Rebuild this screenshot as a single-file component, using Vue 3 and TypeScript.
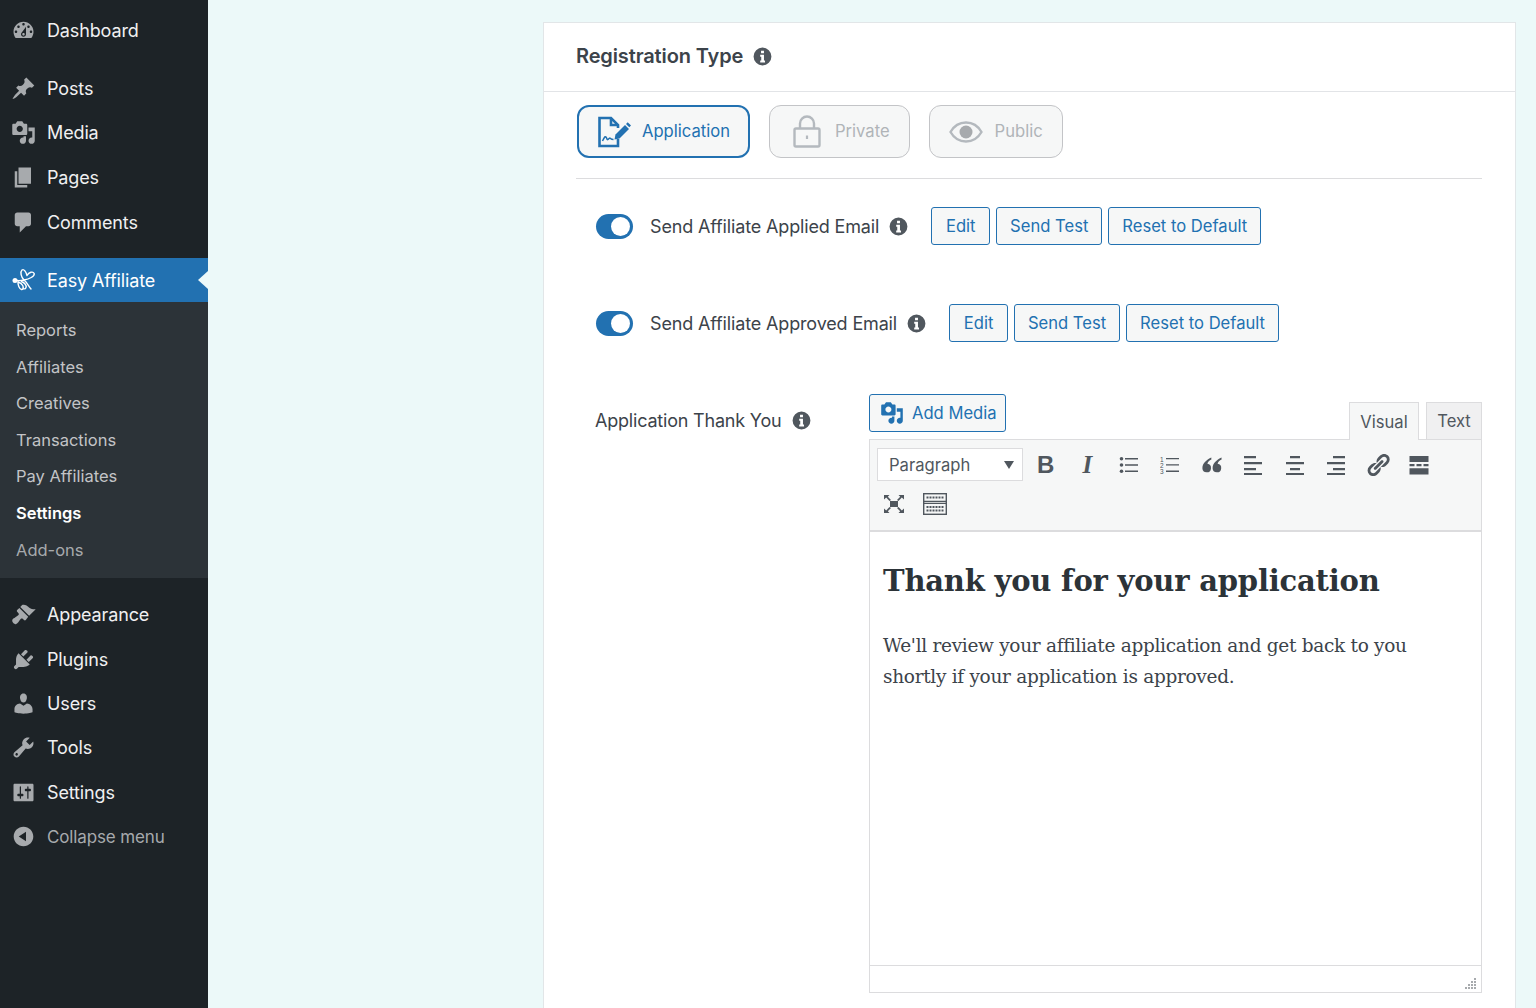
<script setup lang="ts">
const icons: Record<string, string> = {
  dashboard: 'M3.76 16h12.48c1.1-1.37 1.76-3.11 1.76-5 0-4.42-3.58-8-8-8s-8 3.58-8 8c0 1.89.66 3.63 1.76 5zM10 4c.55 0 1 .45 1 1s-.45 1-1 1-1-.45-1-1 .45-1 1-1zM6 6c.55 0 1 .45 1 1s-.45 1-1 1-1-.45-1-1 .45-1 1-1zm8 0c.55 0 1 .45 1 1s-.45 1-1 1-1-.45-1-1 .45-1 1-1zm-5.37 5.55L12 7v6c0 1.1-.9 2-2 2s-2-.9-2-2c0-.57.24-1.08.63-1.45zM4 10c.55 0 1 .45 1 1s-.45 1-1 1-1-.45-1-1 .45-1 1-1zm12 0c.55 0 1 .45 1 1s-.45 1-1 1-1-.45-1-1 .45-1 1-1zm-5 3c0-.55-.45-1-1-1s-1 .45-1 1 .45 1 1 1 1-.45 1-1z',
  post: 'M10.44 3.02l1.82-1.82 6.36 6.35-1.83 1.82c-1.05-.68-2.48-.57-3.41.36l-.75.75c-.92.93-1.04 2.35-.35 3.41l-1.83 1.82-2.41-2.41-2.8 2.79c-.42.42-3.38 2.71-3.8 2.29s1.86-3.39 2.28-3.81l2.79-2.79L4.1 9.36l1.83-1.82c1.05.69 2.48.57 3.4-.36l.75-.75c.93-.92 1.05-2.35.36-3.41z',
  media: 'M13 11V4c0-.55-.45-1-1-1h-1.67L9 1H5L3.67 3H2c-.55 0-1 .45-1 1v7c0 .55.45 1 1 1h10c.55 0 1-.45 1-1zM7 4.5c1.38 0 2.5 1.12 2.5 2.5S8.38 9.5 7 9.5 4.5 8.38 4.5 7 5.62 4.5 7 4.5zM14 6h5v10.5c0 1.38-1.12 2.5-2.5 2.5S14 17.88 14 16.5s1.12-2.5 2.5-2.5c.17 0 .34.02.5.05V9h-3V6zm-4 8.05V13h2v3.5c0 1.38-1.12 2.5-2.5 2.5S7 17.88 7 16.5 8.12 14 9.5 14c.17 0 .34.02.5.05z',
  page: 'M6 15V2h10v13H6zm-1 1h8v2H3V5h2v11z',
  comments: 'M5 2h9c1.1 0 2 .9 2 2v7c0 1.1-.9 2-2 2h-2l-5 5v-5H5c-1.1 0-2-.9-2-2V4c0-1.1.9-2 2-2z',
  appearance: 'M14.48 11.06L7.41 3.99l1.5-1.5c.5-.56 2.3-.47 3.51.32 1.21.8 1.43 1.28 2.91 2.1 1.18.64 2.45 1.26 4.45.85zm-.71.71L6.7 4.7 4.93 6.47c-.39.39-.39 1.02 0 1.41l1.06 1.06c.39.39.39 1.03 0 1.42-.6.6-1.43 1.11-2.21 1.69-.35.26-.7.53-1.01.84C1.43 13.23.4 14.79 1.4 16.14c.35.47.83.99 1.32 1.31.99.67 1.38.42 2.69-.83.31-.31.58-.66.84-1.01.58-.78 1.09-1.61 1.69-2.21.39-.39 1.03-.39 1.42 0l1.06 1.06c.39.39 1.02.39 1.41 0z',
  plugins: 'M13.11 4.36L9.87 7.6 8 5.73l3.24-3.24c.35-.34 1.05-.2 1.56.32.52.51.66 1.21.31 1.55zm-8 1.77l.91-1.12 9.01 9.01-1.19.84c-.71.71-2.63 1.16-3.82 1.16H6.14L4.9 17.26c-.59.59-1.54.59-2.12 0-.59-.58-.59-1.53 0-2.12l1.24-1.24v-3.88c0-1.13.4-3.19 1.09-3.89zm7.26 3.97l3.24-3.24c.34-.35 1.04-.21 1.55.31.52.51.66 1.21.31 1.55l-3.24 3.25z',
  users: 'M10 9.25c-2.27 0-2.73-3.44-2.73-3.44C7 4.02 7.82 2 9.97 2c2.16 0 2.98 2.02 2.71 3.81 0 0-.41 3.44-2.68 3.44zm0 2.57L12.72 10c2.39 0 4.52 2.33 4.52 4.53v2.49s-3.65 1.13-7.24 1.13c-3.65 0-7.24-1.13-7.24-1.13v-2.49c0-2.25 1.94-4.48 4.47-4.48z',
  tools: 'M16.68 9.77c-1.34 1.34-3.3 1.67-4.95.99l-5.41 6.52c-.99.99-2.59.99-3.58 0s-.99-2.59 0-3.57l6.52-5.42c-.68-1.65-.35-3.61.99-4.95 1.28-1.28 3.12-1.62 4.72-1.06l-2.89 2.89 2.82 2.82 2.86-2.87c.53 1.58.18 3.39-1.08 4.65zM3.81 16.21c.4.39 1.04.39 1.43 0 .4-.4.4-1.04 0-1.43-.39-.4-1.03-.4-1.43 0-.39.39-.39 1.03 0 1.43z',
  settings: 'M18 16V4c0-.55-.45-1-1-1H3c-.55 0-1 .45-1 1v12c0 .55.45 1 1 1h14c.55 0 1-.45 1-1zM8 11h1c.55 0 1 .45 1 1s-.45 1-1 1H8v1.5c0 .28-.22.5-.5.5s-.5-.22-.5-.5V13H6c-.55 0-1-.45-1-1s.45-1 1-1h1V5.5c0-.28.22-.5.5-.5s.5.22.5.5V11zm5-2h-1c-.55 0-1-.45-1-1s.45-1 1-1h1V5.5c0-.28.22-.5.5-.5s.5.22.5.5V7h1c.55 0 1 .45 1 1s-.45 1-1 1h-1v5.5c0 .28-.22.5-.5.5s-.5-.22-.5-.5V9z',
  collapse: 'M10 2.16c4.33 0 7.84 3.51 7.84 7.84s-3.51 7.84-7.84 7.84S2.16 14.33 2.16 10 5.71 2.16 10 2.16zm2 11.72V6.12L6.18 9.97z',
  link: 'M17.74 2.76c1.68 1.69 1.68 4.41 0 6.1l-1.53 1.52c-1.12 1.12-2.7 1.47-4.14 1.09l2.62-2.61.76-.77.76-.76c.84-.84.84-2.2 0-3.04-.84-.85-2.2-.85-3.04 0l-.77.76-3.38 3.38c-.37-1.44-.02-3.02 1.1-4.14l1.52-1.53c1.69-1.68 4.42-1.68 6.1 0zM8.59 13.43l5.34-5.34c.42-.42.42-1.1 0-1.52-.44-.43-1.13-.39-1.53 0l-5.33 5.34c-.42.42-.42 1.1 0 1.52.44.43 1.13.39 1.52 0zm-.76 2.29l4.14-4.15c.38 1.44.03 3.02-1.09 4.14l-1.52 1.53c-1.69 1.68-4.41 1.68-6.1 0-1.68-1.68-1.68-4.42 0-6.1l1.53-1.52c1.12-1.12 2.7-1.47 4.14-1.1l-4.14 4.15c-.85.84-.85 2.2 0 3.05.84.84 2.2.84 3.04 0z',
  info: 'M10 1.5a8.5 8.5 0 1 0 0 17 8.5 8.5 0 0 0 0-17zM8.6 4.6h2.8v2.4H8.6zM7.8 8.3h3.6v5.4h1v1.9H7.8v-1.9h1v-3.5h-1z',
  quote: 'M9.300 2.500C5 4.500 .4 8 .4 13.200a4.300 4.300 0 1 0 5-4.400c.3-1.800 2-3.200 4-4.200zM19.500 2.500C15.200 4.500 10.600 8 10.600 13.200a4.300 4.300 0 1 0 5-4.400c.3-1.800 2-3.200 4-4.200z',
  alignLeft: 'M1 1h12v2.200H1zM1 7h18v2.200H1zM1 13h12v2.200H1zM1 18h18v2.200H1z',
  alignCenter: 'M5 1h10v2.200H5zM1 7h18v2.200H1zM5 13h10v2.200H5zM1 18h18v2.200H1z',
  alignRight: 'M7 1h12v2.200H7zM1 7h18v2.200H1zM7 13h12v2.200H7zM1 18h18v2.200H1z',
  more: 'M.5 1h19v6H.5zM.5 9h5v2.200h-5zM7.500 9h5v2.200h-5zM14.500 9h5v2.200h-5zM.5 13.200h19V19.500H.5z',
}

const topMenu = [
  { label: 'Posts', icon: 'post' },
  { label: 'Media', icon: 'media' },
  { label: 'Pages', icon: 'page' },
  { label: 'Comments', icon: 'comments' },
]
const subMenu = ['Reports', 'Affiliates', 'Creatives', 'Transactions', 'Pay Affiliates', 'Settings', 'Add-ons']
const lowerMenu = [
  { label: 'Appearance', icon: 'appearance' },
  { label: 'Plugins', icon: 'plugins' },
  { label: 'Users', icon: 'users' },
  { label: 'Tools', icon: 'tools' },
  { label: 'Settings', icon: 'settings' },
]
const emailRows = [
  { label: 'Send Affiliate Applied Email' },
  { label: 'Send Affiliate Approved Email' },
]
const alignTools = ['alignLeft', 'alignCenter', 'alignRight']
</script>

<template>
  <div class="page">
    <aside class="sidebar">
      <a class="item first">
        <svg class="mi" viewBox="0 0 20 20"><path :d="icons.dashboard" /></svg>
        <span>Dashboard</span>
      </a>
      <div class="group">
        <a v-for="m in topMenu" :key="m.label" class="item">
          <svg class="mi" viewBox="0 0 20 20"><path :d="icons[m.icon]" /></svg>
          <span>{{ m.label }}</span>
        </a>
      </div>
      <a class="item active">
        <svg class="mi bee" viewBox="0 0 25 25" fill="none" stroke="#fff" stroke-width="1.400" stroke-linecap="round" stroke-linejoin="round">
          <circle cx="4" cy="13.500" r="2.500" fill="#fff" stroke="none" />
          <path d="M13 13C10 10 9 5 11 3c2-1.500 4 2 5 5.500C18 5 22 4 23.200 6.500 24 9.500 18 12 13 13z" />
          <path d="M6 13.500c2 .3 4 .2 7-.5M7 15c-.3 3 1.500 7 3.500 7.500 2 .3 2.200-2 1.200-4-1-2-3-3-4.700-3.500zM10.500 14.500c2.500 1 5.500 3.500 4.500 6-.7 2-2.500 1.500-3.200.5M13.500 13.500c2.500 2 4 5.500 6.500 8.500" />
        </svg>
        <span>Easy Affiliate</span>
      </a>
      <div class="submenu">
        <a v-for="s in subMenu" :key="s" class="subitem" :class="{ current: s === 'Settings', dim: s === 'Add-ons' }">{{ s }}</a>
      </div>
      <div class="group lower">
        <a v-for="m in lowerMenu" :key="m.label" class="item low">
          <svg class="mi" viewBox="0 0 20 20"><path :d="icons[m.icon]" /></svg>
          <span>{{ m.label }}</span>
        </a>
        <a class="item low collapse">
          <svg class="mi" viewBox="0 0 20 20"><path :d="icons.collapse" /></svg>
          <span>Collapse menu</span>
        </a>
      </div>
    </aside>

    <main class="main">
      <section class="card">
        <header class="card-head">
          <h2>Registration Type</h2>
          <svg class="info head-info" viewBox="0 0 20 20"><path fill-rule="evenodd" :d="icons.info" /></svg>
        </header>
        <div class="card-body">
          <div class="types">
            <button class="type selected">
              <svg class="type-icon" viewBox="0 0 34 32" fill="none" stroke="#2271b1" stroke-width="2.600">
                <path d="M21 23v7H2.500V2H14l7 7v3" />
                <path d="M14 2v7h7" />
                <path d="M5.500 25c1.500-3 2.500-5 3.500-4s.8 3.500 2 2.500 1.500-2 2.500-1 1.500 1 3 1" stroke-width="1.500" />
                <path d="M17.500 23.500l1-5L28 9l4 4-9.500 9.500z" fill="#2271b1" stroke="none" />
                <path d="M29 8l1.700-1.700 3.300 3.300L32.300 11.300z" fill="#2271b1" stroke="none" />
              </svg>
              <span>Application</span>
            </button>
            <button class="type private">
              <svg class="type-icon lock" viewBox="0 0 28 32" fill="none" stroke="#b4b9be" stroke-width="2.400">
                <rect x="1.500" y="13" width="25" height="18" rx="1.500" />
                <path d="M7 13V8a7 7 0 0 1 14 0v5" />
                <path d="M14 20v3.500" stroke-width="2.200" />
              </svg>
              <span>Private</span>
            </button>
            <button class="type public">
              <svg class="type-icon eye" viewBox="0 0 34 22" fill="none" stroke="#b4b9be" stroke-width="2.400">
                <path d="M1.500 11C5.500 4 11 1.500 17 1.500S28.500 4 32.500 11C28.500 18 23 20.500 17 20.500S5.500 18 1.500 11z" />
                <circle cx="17" cy="11" r="6.500" fill="#a7aaad" stroke="none" />
              </svg>
              <span>Public</span>
            </button>
          </div>

          <div class="rows">
            <div v-for="r in emailRows" :key="r.label" class="email-row">
              <span class="toggle"><span class="knob" /></span>
              <span class="label">{{ r.label }}</span>
              <svg class="info gap" viewBox="0 0 20 20"><path fill-rule="evenodd" :d="icons.info" /></svg>
              <div class="btns">
                <button class="wp-btn">Edit</button>
                <button class="wp-btn">Send Test</button>
                <button class="wp-btn">Reset to Default</button>
              </div>
            </div>
          </div>

          <div class="thanks">
            <div class="thanks-label">
              <span class="label tight">Application Thank You</span>
              <svg class="info gap" viewBox="0 0 20 20"><path fill-rule="evenodd" :d="icons.info" /></svg>
            </div>
            <div class="editor">
              <div class="editor-top">
                <button class="wp-btn media-btn">
                  <svg viewBox="0 0 20 20"><path :d="icons.media" /></svg>
                  <span>Add Media</span>
                </button>
                <div class="tabs">
                  <span class="tab on">Visual</span>
                  <span class="tab off">Text</span>
                </div>
              </div>
              <div class="frame">
                <div class="toolbar">
                  <div class="tb-row">
                    <div class="select"><span>Paragraph</span><i class="caret" /></div>
                    <span class="tool bold">B</span>
                    <span class="tool ital">I</span>
                    <span class="tool">
                      <svg viewBox="0 0 20 20"><path d="M6 3h13v1.500H6zM6 9.250h13v1.500H6zM6 15.500h13v1.500H6z" /><circle cx="2.500" cy="3.700" r="1.800" /><circle cx="2.500" cy="10" r="1.800" /><circle cx="2.500" cy="16.200" r="1.800" /></svg>
                    </span>
                    <span class="tool">
                      <svg viewBox="0 0 20 20"><path d="M6 3h13v1.300H6zM6 9.300h13v1.300H6zM6 15.600h13v1.300H6z" /><text x="0" y="6.500" class="olnum">1</text><text x="0" y="12.700" class="olnum">2</text><text x="0" y="19" class="olnum">3</text></svg>
                    </span>
                    <span class="tool"><svg viewBox="0 0 20 20"><path :d="icons.quote" /></svg></span>
                    <span v-for="t in alignTools" :key="t" class="tool"><svg viewBox="0 0 20 20"><path :d="icons[t]" /></svg></span>
                    <span class="tool"><svg class="linkic" viewBox="0 0 20 20"><path :d="icons.link" /></svg></span>
                    <span class="tool"><svg viewBox="0 0 20 20"><path :d="icons.more" /></svg></span>
                  </div>
                  <div class="tb-row second">
                    <span class="tool">
                      <svg viewBox="0 0 22 20" fill="#50575e">
                        <rect x="7" y="7" width="8" height="6" />
                        <path d="M1 1h5.500L4.800 2.700 8 6 6.500 7 3.200 3.600 1 5.500zM21 1h-5.500l1.700 1.700L14 6l1.500 1 3.300-3.400L21 5.500zM1 19h5.500l-1.700-1.700L8 14l-1.500-1-3.300 3.400L1 14.500zM21 19h-5.500l1.700-1.700L14 14l1.500-1 3.300 3.400 2.200-1.900z" />
                      </svg>
                    </span>
                    <span class="tool">
                      <svg class="kbd" viewBox="0 0 24 22" fill="none" stroke="#50575e" stroke-width="1.400">
                        <rect x=".7" y=".7" width="22.600" height="20.600" />
                        <path d="M.7 8.300h22.600M.7 10.400h22.600" stroke-width="1.300" />
                        <path d="M3.500 4.500h17M3.500 14h17M3.500 17.500h17" stroke-width="2.200" stroke-dasharray="2 1" />
                      </svg>
                    </span>
                  </div>
                </div>
                <div class="content">
                  <h1>Thank you for your application</h1>
                  <p>We'll review your affiliate application and get back to you shortly if your application is approved.</p>
                </div>
                <div class="status">
                  <svg viewBox="0 0 12 12" fill="#a7aaad"><rect x="9" y="1" width="2" height="2" /><rect x="6" y="4" width="2" height="2" /><rect x="9" y="4" width="2" height="2" /><rect x="3" y="7" width="2" height="2" /><rect x="6" y="7" width="2" height="2" /><rect x="9" y="7" width="2" height="2" /><rect x="0" y="10" width="2" height="2" /><rect x="3" y="10" width="2" height="2" /><rect x="6" y="10" width="2" height="2" /><rect x="9" y="10" width="2" height="2" /></svg>
                </div>
              </div>
            </div>
          </div>
        </div>
      </section>
    </main>
  </div>
</template>

<style>
html, body { margin: 0; background: #ecf9f9; overflow: hidden; }
</style>

<style scoped>
.page {
  display: flex;
  height: 1008px;
  overflow: hidden;
  font-family: Inter, "Liberation Sans", sans-serif;
  background: #ecf9f9;
  color: #3c434a;
}
.sidebar {
  width: 208px;
  flex: none;
  background: #1d2327;
  display: flex;
  flex-direction: column;
  padding-top: 8px;
  box-sizing: border-box;
}
.item {
  display: flex;
  align-items: center;
  height: 44.6px;
  padding-left: 11px;
  color: #f0f0f1;
  font-size: 18px;
  letter-spacing: -.13px;
  position: relative;
  box-sizing: border-box;
}
.item span { margin-left: 11px; }
.mi { width: 25px; height: 25px; fill: #a7aaad; flex: none; }
.group { margin-top: 14px; }
.group.lower { margin-top: 14.300px; }
.item.first { height: 44px; }
.item.low { height: 44.400px; }
.active {
  background: #2271b1;
  color: #fff;
  height: 44px;
  margin-top: 13.600px;
}
.active span { padding-top: 2px; }
.active::after {
  content: "";
  position: absolute;
  right: 0;
  top: 13px;
  border: 9px solid transparent;
  border-left-width: 0;
  border-right: 10px solid #ecf9f9;
}
.mi.bee { fill: none; }
.submenu {
  background: #2c3338;
  padding: 10px 0;
  display: flex;
  flex-direction: column;
}
.subitem {
  height: 36.600px;
  line-height: 36.600px;
  padding-left: 16px;
  font-size: 16.500px;
  color: #c3c4c7;
}
.subitem.current { color: #fff; font-weight: 600; }
.subitem.dim { color: #a7aaad; }
.collapse { color: #a7aaad; font-size: 17px; }

.main { flex: 1; min-width: 0; padding: 22px 20px 0 335px; }
.card {
  background: #fff;
  border: 1px solid #e2e6e8;
  border-bottom: 0;
  width: 973px;
  height: 986px;
  box-sizing: border-box;
}
.card-head {
  border-bottom: 1px solid #e2e4e7;
  display: flex;
  align-items: center;
  padding: 0 32px 3px;
  height: 65px;
  gap: 9px;
}
.card-head h2 { margin: 0; font-size: 20px; font-weight: 600; color: #3c434a; letter-spacing: -.13px; }
.info { width: 21px; height: 21px; fill: #50575e; flex: none; }
.head-info { margin-top: 2px; }
.gap { margin-left: 9px; }
.card-body { padding: 13px 33px 0 32px; }
.types {
  display: flex;
  gap: 19px;
  padding: 0 0 20px 1px;
  border-bottom: 1px solid #dcdcde;
}
.type {
  font: inherit;
  height: 53px;
  display: flex;
  align-items: center;
  gap: 12px;
  padding: 0 19px;
  box-sizing: border-box;
  background: #f6f7f7;
  border: 1.500px solid #c3c4c7;
  border-radius: 12px;
  color: #b0b4b8;
  font-size: 16.600px;
}
.type span { margin-bottom: 2px; }
.type.selected { border: 2px solid #2271b1; color: #2271b1; gap: 11px; padding: 0 18px; }
.type.private { padding-left: 23px; gap: 14px; }
.type-icon { width: 34px; height: 32px; flex: none; }
.lock { width: 28px; height: 33px; }
.eye { width: 34px; height: 22px; }
.rows {
  display: flex;
  flex-direction: column;
  gap: 59px;
  padding: 28px 0 0 20px;
}
.email-row { display: flex; align-items: center; height: 38px; }
.toggle {
  width: 37px;
  height: 25px;
  border-radius: 13px;
  background: #2271b1;
  margin-right: 17px;
  display: flex;
  align-items: center;
  justify-content: flex-end;
  padding-right: 3px;
  box-sizing: border-box;
  flex: none;
}
.knob { width: 19px; height: 19px; border-radius: 50%; background: #fff; }
.label { font-size: 18px; color: #3c434a; letter-spacing: -.15px; white-space: nowrap; }
.label.tight { letter-spacing: -.2px; margin-left: -1px; }
.btns { display: flex; gap: 6px; margin-left: 22px; }
.btns .wp-btn { justify-content: center; padding: 0; }
.btns .wp-btn:nth-child(1) { width: 59px; }
.btns .wp-btn:nth-child(2) { width: 106px; }
.btns .wp-btn:nth-child(3) { width: 153px; }
.wp-btn {
  font: inherit;
  font-size: 16.600px;
  height: 38px;
  padding: 0 13.500px;
  color: #2271b1;
  background: #f6f7f7;
  border: 1px solid #2271b1;
  border-radius: 3px;
  box-sizing: border-box;
  display: flex;
  align-items: center;
}
.thanks { display: flex; padding: 52px 0 0 20px; }
.thanks-label { width: 273px; flex: none; display: flex; align-items: center; height: 52px; box-sizing: border-box; padding-top: 1px; align-self: flex-start; }
.editor { flex: 1; min-width: 0; }
.editor-top { display: flex; justify-content: space-between; height: 45px; }
.media-btn { padding: 0 8px 0 10px; gap: 8px; }
.media-btn svg { width: 24px; height: 24px; fill: #2271b1; }
.tabs { display: flex; gap: 7px; align-self: flex-end; }
.tab {
  height: 37px;
  box-sizing: border-box;
  display: flex;
  align-items: center;
  justify-content: center;
  font-size: 16.600px;
  color: #50575e;
  background: #f0f0f1;
  border: 1px solid #dcdcde;
  border-bottom: 0;
}
.tab.on { width: 70px; background: #f6f7f7; height: 38px; margin-bottom: -1px; position: relative; }
.tab.off { width: 56px; }
.frame { border: 1px solid #dcdcde; display: flex; flex-direction: column; height: 554px; box-sizing: border-box; }
.toolbar {
  background: #f6f7f7;
  border-bottom: 2px solid #dcdcde;
  height: 92px;
  box-sizing: border-box;
  padding: 5px 0 0 3px;
  flex: none;
}
.tb-row { display: flex; align-items: center; height: 39px; }
.select {
  width: 146px;
  height: 33px;
  box-sizing: border-box;
  margin: 0 2px 0 4px;
  background: #fff;
  border: 1px solid #dcdcde;
  display: flex;
  align-items: center;
  justify-content: space-between;
  padding: 0 8px 0 11px;
  font-size: 16.600px;
  color: #50575e;
}
.caret { border: 5px solid transparent; border-top: 8px solid #50575e; border-bottom: 0; }
.tool {
  width: 41.500px;
  height: 38px;
  display: flex;
  align-items: center;
  justify-content: center;
  color: #50575e;
  flex: none;
}
.tool svg { width: 20px; height: 20px; fill: #50575e; }
.tool svg.linkic { width: 26px; height: 26px; }
.tool svg.kbd { width: 24px; height: 22px; fill: none; }
.second .tool svg { width: 22px; }
.second .tool svg.kbd { width: 24px; }
.bold { font: 700 24px "Liberation Sans", sans-serif; }
.ital { font: italic 700 25px "Liberation Serif", serif; }
.olnum { font: 6.500px "Liberation Sans", sans-serif; fill: #50575e; }
.content { flex: 1; padding: 28px 60px 0 13px; background: #fff; color: #3c434a; font-family: "DejaVu Serif", serif; }
.content h1 { margin: 0 0 28px; font-size: 29px; line-height: 42px; font-weight: 700; color: #2c3338; letter-spacing: -.2px; }
.content p { margin: 0; font-size: 18.500px; line-height: 31px; letter-spacing: -.3px; }
.status {
  flex: none;
  height: 27px;
  background: #fff;
  border-top: 1px solid #dcdcde;
  box-sizing: border-box;
  display: flex;
  justify-content: flex-end;
  align-items: flex-end;
  padding: 0 4px 3px 0;
}
.status svg { width: 12px; height: 12px; }
</style>
